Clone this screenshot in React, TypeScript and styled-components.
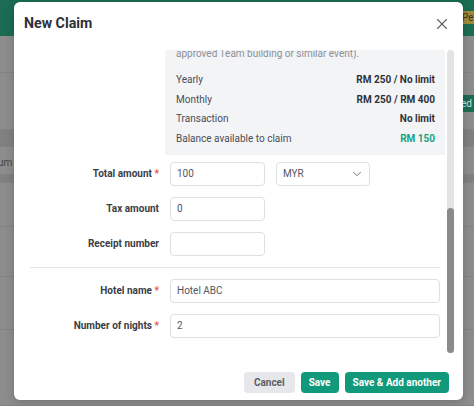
import React, { useEffect, useRef } from "react";
import styled, { createGlobalStyle } from "styled-components";
import { X, ChevronDown } from "lucide-react";

const GlobalStyle = createGlobalStyle`
  html, body {
    margin: 0;
    padding: 0;
  }
  body {
    font-family: Roboto, "Noto Sans", "Liberation Sans", sans-serif;
    background: #8d8d8d;
  }
  * {
    box-sizing: border-box;
  }
`;

type Limit = { name: string; value: string; highlight?: boolean };

const limits: Limit[] = [
  { name: "Yearly", value: "RM 250 / No limit" },
  { name: "Monthly", value: "RM 250 / RM 400" },
  { name: "Transaction", value: "No limit" },
  { name: "Balance available to claim", value: "RM 150", highlight: true },
];

export default function App(): JSX.Element {
  const scrollRef = useRef<HTMLDivElement>(null);

  // form is scrolled down to the bottom in the screenshot
  useEffect(() => {
    if (scrollRef.current) scrollRef.current.scrollTop = 10000;
  }, []);

  return (
    <Page>
      <GlobalStyle />
      <AppHeader>
        <Badge>Pe</Badge>
      </AppHeader>
      <BgRow $h={37} />
      <BgRow $h={57} $end>
        <BgButton>ted</BgButton>
      </BgRow>
      <BgRow $h={17} $dark />
      <BgRow $h={28}>
        <BgText>um</BgText>
      </BgRow>
      <BgRow $h={8} $dark />
      <BgRow $h={44} />
      <BgRow $h={50} />
      <BgRow $h={53} />
      <BgRow $h={76} />

      <Overlay>
        <Modal>
          <ModalHeader>
            <Title>New Claim</Title>
            <CloseBtn>
              <X size={18} strokeWidth={1.5} />
            </CloseBtn>
          </ModalHeader>

          <BodyWrap>
            <Body ref={scrollRef}>
              <FormRow>
                <Label>
                  Claim type <Star>*</Star>
                </Label>
                <Input defaultValue="Team building" readOnly />
              </FormRow>
              <FormRow>
                <Label>
                  Receipt date <Star>*</Star>
                </Label>
                <Input defaultValue="12/03/2024" readOnly $w={95} />
              </FormRow>
              <FormRow>
                <Label>Description</Label>
                <TextArea defaultValue="Hotel stay" readOnly />
              </FormRow>
              <FormRow>
                <Label>Attachment</Label>
                <Input defaultValue="receipt.pdf" readOnly />
              </FormRow>

              <InfoBox>
                <InfoNote>
                  Hotel accommodation claimed while attending an
                  <br />
                  approved Team building or similar event).
                </InfoNote>
                {limits.map((l) => (
                  <InfoRow key={l.name}>
                    <span>{l.name}</span>
                    <InfoValue $highlight={l.highlight}>{l.value}</InfoValue>
                  </InfoRow>
                ))}
              </InfoBox>

              <FormRow>
                <Label>
                  Total amount <Star>*</Star>
                </Label>
                <Controls>
                  <Input defaultValue="100" readOnly $w={95} />
                  <Select>
                    <span>MYR</span>
                    <ChevronDown size={14} strokeWidth={1.4} />
                  </Select>
                </Controls>
              </FormRow>
              <FormRow>
                <Label>Tax amount</Label>
                <Input defaultValue="0" readOnly $w={95} />
              </FormRow>
              <FormRow>
                <Label>Receipt number</Label>
                <Input defaultValue="" readOnly $w={95} />
              </FormRow>

              <Divider />

              <FormRow>
                <Label>
                  Hotel name <Star>*</Star>
                </Label>
                <Input defaultValue="Hotel ABC" readOnly />
              </FormRow>
              <FormRow>
                <Label>
                  Number of nights <Star>*</Star>
                </Label>
                <Input defaultValue="2" readOnly />
              </FormRow>
            </Body>
            <ScrollTrack>
              <ScrollThumb />
            </ScrollTrack>
          </BodyWrap>

          <Footer>
            <CancelBtn>Cancel</CancelBtn>
            <PrimaryBtn>Save</PrimaryBtn>
            <PrimaryBtn>Save &amp; Add another</PrimaryBtn>
          </Footer>
        </Modal>
      </Overlay>
    </Page>
  );
}

const Page = styled.div`
  position: relative;
  width: 474px;
  height: 406px;
  overflow: hidden;
  background: #8d8d8d;
`;
const AppHeader = styled.header`
  height: 36px;
  background: #1b6c52;
  display: flex;
  justify-content: flex-end;
  align-items: center;
`;
const Badge = styled.span`
  height: 13px;
  width: 14px;
  margin-top: -1px;
  background: #a38a3a;
  color: #3b3320;
  font-size: 10px;
  line-height: 13px;
  padding-left: 2px;
  border-radius: 2px 0 0 2px;
`;
const BgRow = styled.div<{ $h: number; $dark?: boolean; $end?: boolean }>`
  height: ${(p) => p.$h}px;
  background: ${(p) => (p.$dark ? "#808080" : "#8d8d8d")};
  border-bottom: 1px solid #838383;
  display: flex;
  align-items: center;
  justify-content: ${(p) => (p.$end ? "flex-end" : "flex-start")};
`;
const BgButton = styled.span`
  background: #1b6c52;
  color: #cfe3dc;
  font-size: 10px;
  height: 17px;
  line-height: 17px;
  margin-top: 4px;
  padding: 0 2px 0 6px;
  border-radius: 3px 0 0 3px;
`;
const BgText = styled.span`
  font-size: 10px;
  color: #444;
  margin: 3px 0 0 -2px;
`;
const Overlay = styled.div`
  position: absolute;
  inset: 0;
  padding: 2px 11px 6px 14px;
  display: flex;
`;
const Modal = styled.div`
  flex: 1;
  background: #fff;
  border-radius: 6px;
  box-shadow: 0 2px 10px rgba(0, 0, 0, 0.2);
  display: flex;
  flex-direction: column;
`;
const ModalHeader = styled.div`
  height: 48px;
  padding: 0 12px 6px 10px;
  display: flex;
  align-items: center;
  justify-content: space-between;
`;
const Title = styled.h2`
  margin: 0;
  font-size: 14.2px;
  font-weight: 700;
  color: #2e3139;
`;
const CloseBtn = styled.button`
  border: none;
  background: none;
  padding: 0;
  margin-top: 2px;
  color: #5b5e66;
  display: flex;
  cursor: pointer;
`;
const BodyWrap = styled.div`
  height: 303px;
  display: flex;
  margin-right: 9px;
`;
const Body = styled.div`
  flex: 1;
  overflow-y: auto;
  scrollbar-width: none;
  padding: 0 7px 15px 16px;
  display: flex;
  flex-direction: column;
  gap: 11px;
  &::-webkit-scrollbar {
    display: none;
  }
`;
const ScrollTrack = styled.div`
  width: 7px;
  background: #e4e4e4;
  border-radius: 4px;
  display: flex;
  flex-direction: column;
  justify-content: flex-end;
`;
const ScrollThumb = styled.div`
  height: 145px;
  background: #8a8a8a;
  border-radius: 4px;
`;
const FormRow = styled.div`
  display: grid;
  grid-template-columns: 129px 1fr;
  column-gap: 11px;
  align-items: center;
  flex-shrink: 0;
`;
const Label = styled.label`
  text-align: right;
  font-size: 10px;
  font-weight: 700;
  color: #3a3d45;
`;
const Star = styled.span`
  color: #e0534f;
`;
const Controls = styled.div`
  display: flex;
  gap: 11px;
`;
const Input = styled.input<{ $w?: number }>`
  width: ${(p) => (p.$w ? `${p.$w}px` : "100%")};
  height: 24px;
  border: 1px solid #dcdfe4;
  border-radius: 4px;
  padding: 0 6px;
  font-family: inherit;
  font-size: 10px;
  color: #55585f;
  outline: none;
`;
const TextArea = styled.textarea`
  height: 60px;
  border: 1px solid #dcdfe4;
  border-radius: 4px;
  padding: 5px 6px;
  font-family: inherit;
  font-size: 10px;
  color: #55585f;
  resize: none;
`;
const Select = styled.div`
  width: 94px;
  height: 24px;
  border: 1px solid #dcdfe4;
  border-radius: 4px;
  padding: 0 5px 0 6px;
  display: flex;
  align-items: center;
  justify-content: space-between;
  font-size: 10px;
  color: #55585f;
`;
const InfoBox = styled.div`
  flex-shrink: 0;
  margin: 0 -5px -4px 135px;
  padding: 8px 10px 9px 11px;
  background: #f3f4f6;
  display: flex;
  flex-direction: column;
  gap: 5.5px;
`;
const InfoNote = styled.p`
  margin: 0 0 6.5px;
  font-size: 10px;
  line-height: 14px;
  color: #8b8f97;
`;
const InfoRow = styled.div`
  display: flex;
  justify-content: space-between;
  font-size: 10px;
  line-height: 14px;
  color: #4a4d55;
`;
const InfoValue = styled.span<{ $highlight?: boolean }>`
  font-weight: 700;
  color: ${(p) => (p.$highlight ? "#17a382" : "#2e3139")};
`;
const Divider = styled.hr`
  flex-shrink: 0;
  width: 100%;
  margin: 0;
  border: none;
  border-top: 1px solid #e3e5e8;
`;
const Footer = styled.div`
  flex: 1;
  display: flex;
  justify-content: flex-end;
  align-items: flex-end;
  gap: 6px;
  padding: 0 14px 7px;
`;
const BtnStyle = `
  height: 21px;
  border: none;
  border-radius: 4px;
  padding: 0 8px;
  font-family: inherit;
  font-size: 10px;
  font-weight: 700;
  cursor: pointer;
`;
const CancelBtn = styled.button`
  ${BtnStyle}
  padding: 0 10px;
  background: #e5e7eb;
  color: #5b5e66;
`;
const PrimaryBtn = styled.button`
  ${BtnStyle}
  background: #10997a;
  color: #fff;
`;
